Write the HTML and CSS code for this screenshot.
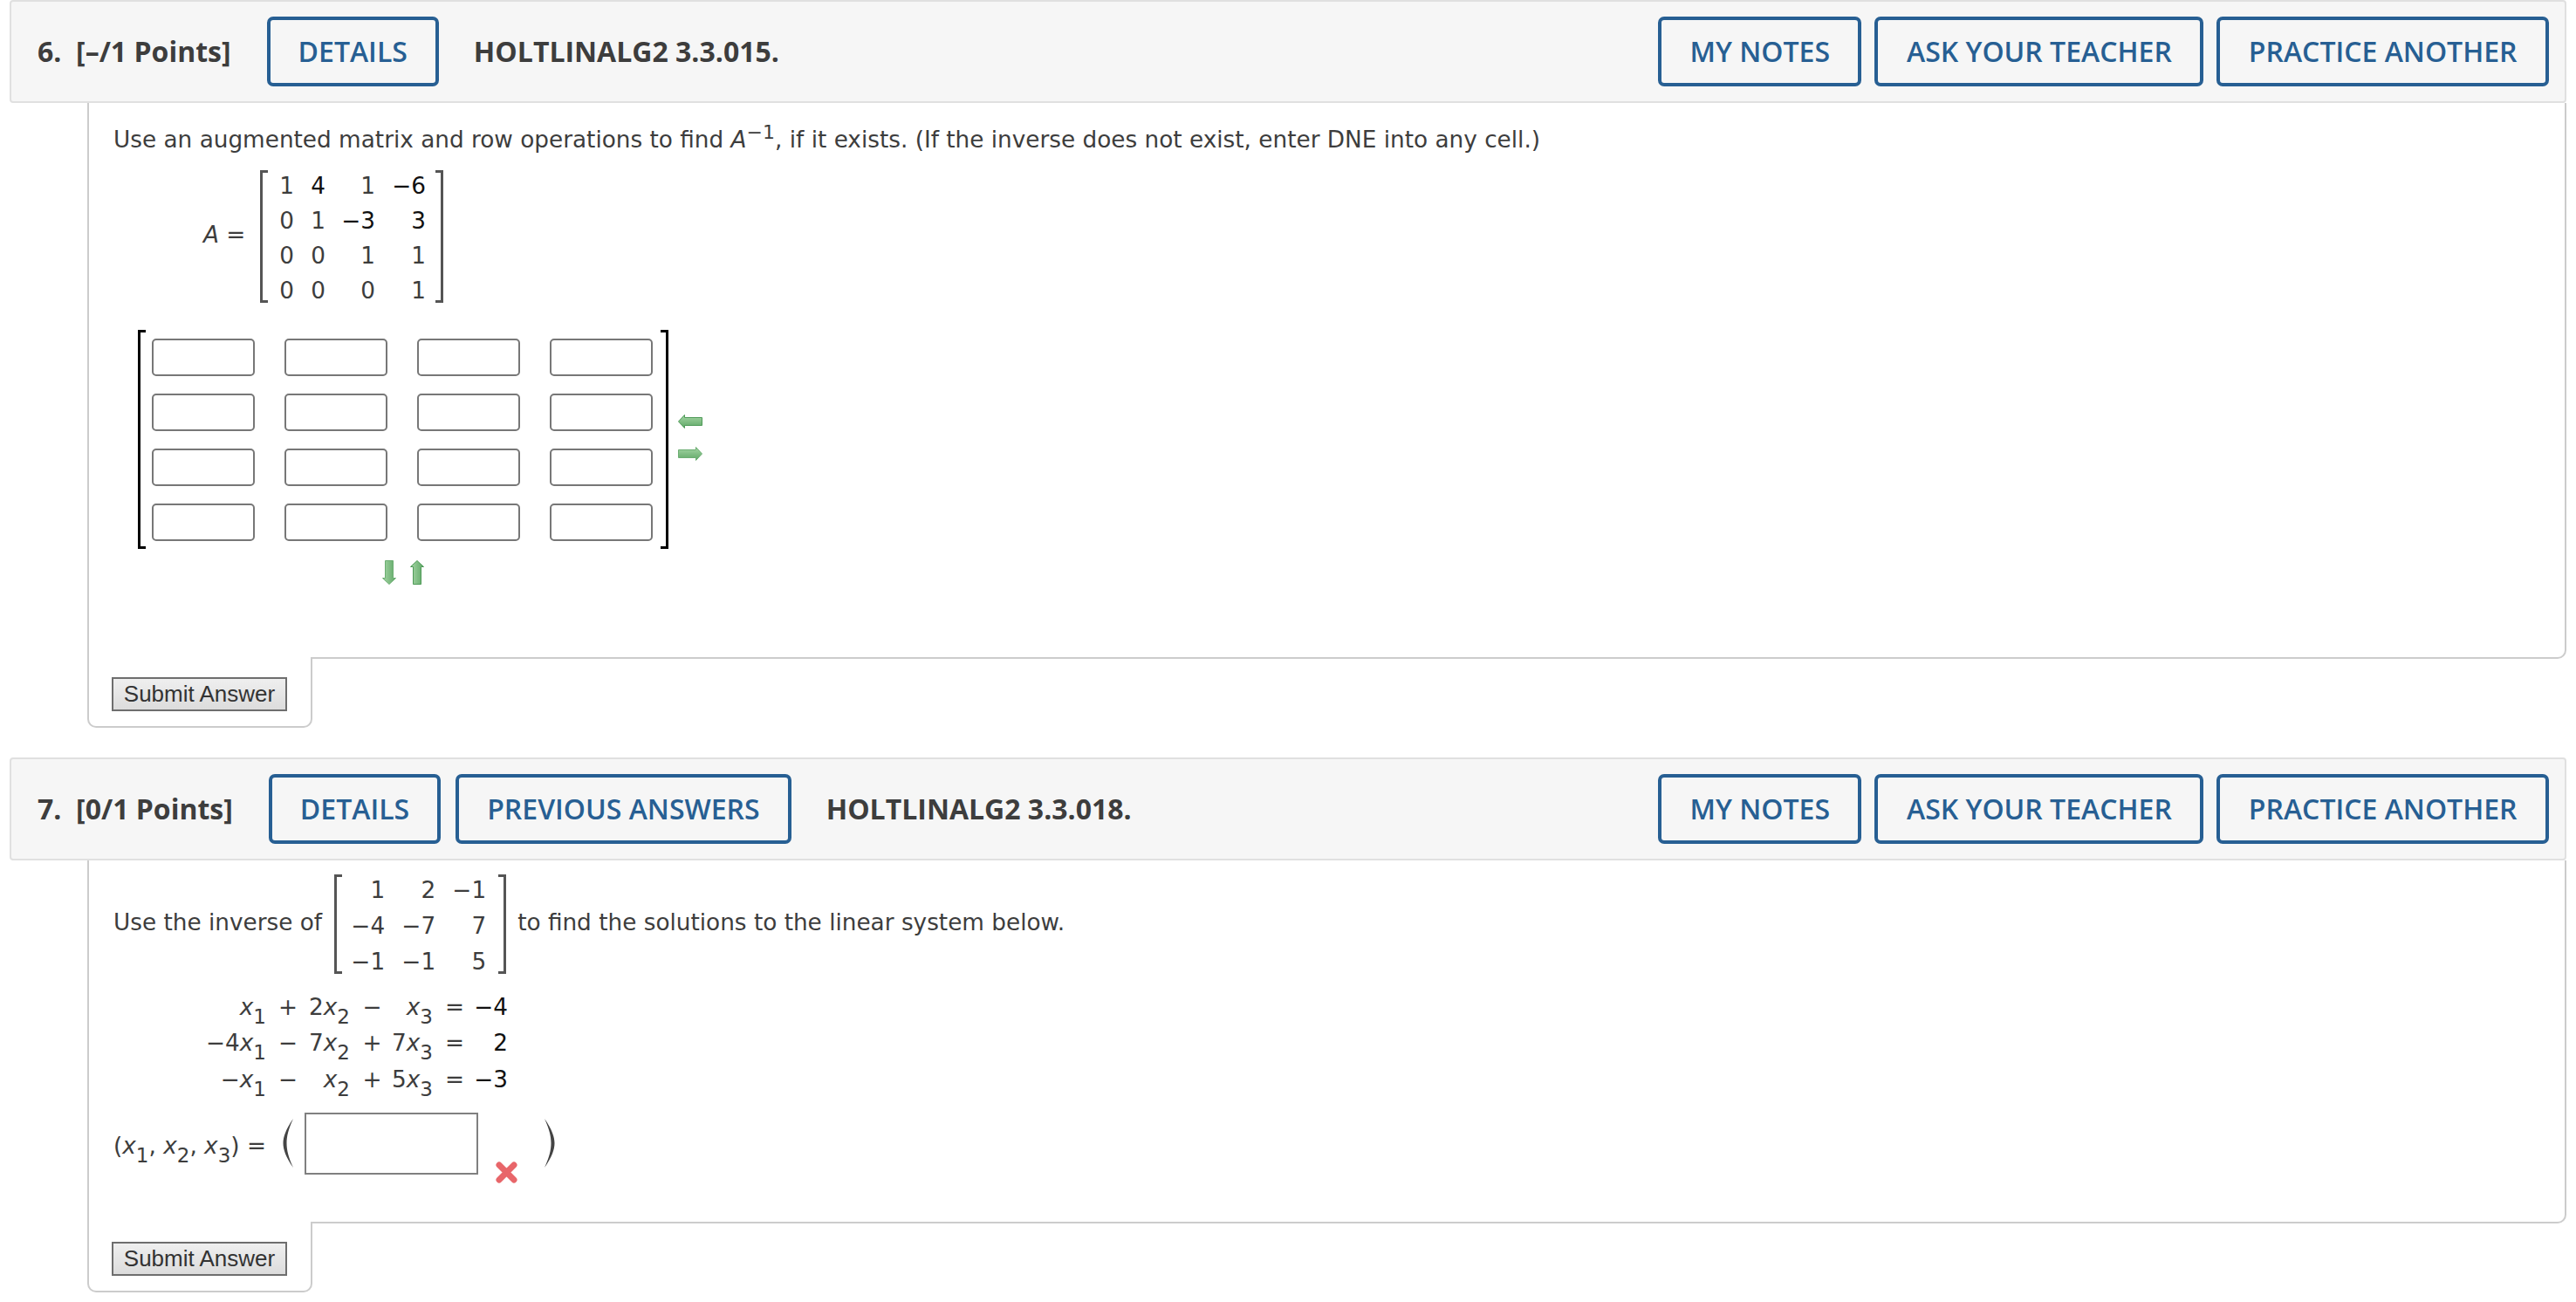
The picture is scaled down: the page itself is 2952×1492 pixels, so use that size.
FILE: index.html
```html
<!DOCTYPE html>
<html lang="en">
<head>
  <meta charset="UTF-8">
  <title>Assignment</title>
  <link rel="stylesheet" href="styles.css">
</head>
<body>
  <svg class="defs" width="0" height="0">
    <defs>
      <linearGradient id="arrowFill" x1="0" y1="0" x2="0" y2="1">
        <stop offset="0" stop-color="#a5d6a5"/>
        <stop offset="1" stop-color="#5fa766"/>
      </linearGradient>
      <linearGradient id="arrowFillV" x1="0" y1="0" x2="1" y2="0">
        <stop offset="0" stop-color="#a5d6a5"/>
        <stop offset="1" stop-color="#5fa766"/>
      </linearGradient>
    </defs>
  </svg>

  <!-- question 6 -->
  <div class="q-header">
    <span class="q-points">6.&nbsp; [–/1 Points]</span>
    <a class="q-btn q-btn-first">DETAILS</a>
    <span class="q-code">HOLTLINALG2 3.3.015.</span>
    <div class="q-actions">
      <a class="q-btn">MY NOTES</a>
      <a class="q-btn">ASK YOUR TEACHER</a>
      <a class="q-btn">PRACTICE ANOTHER</a>
    </div>
  </div>
  <div class="q-main q-main-six">
    <p class="q-text">Use an augmented matrix and row operations to find <i>A</i><sup class="inv">−1</sup>, if it exists. (If the inverse does not exist, enter DNE into any cell.)</p>

    <div class="a-line">
      <span class="a-label"><i>A</i> =</span>
      <span class="brk brk-l brk-four"></span>
      <div class="matrix matrix-a">
        <span>1</span><span class="dark">4</span><span>1</span><span class="dark">−6</span>
        <span>0</span><span>1</span><span class="dark">−3</span><span class="dark">3</span>
        <span>0</span><span>0</span><span>1</span><span>1</span>
        <span>0</span><span>0</span><span>0</span><span>1</span>
      </div>
      <span class="brk brk-r brk-four"></span>
    </div>

    <div class="entry">
      <div class="entry-wrap">
        <div class="entry-matrix">
          <div class="cell"></div><div class="cell"></div><div class="cell"></div><div class="cell"></div>
          <div class="cell"></div><div class="cell"></div><div class="cell"></div><div class="cell"></div>
          <div class="cell"></div><div class="cell"></div><div class="cell"></div><div class="cell"></div>
          <div class="cell"></div><div class="cell"></div><div class="cell"></div><div class="cell"></div>
        </div>
        <div class="col-arrows">
          <svg width="16" height="28" viewBox="0 0 16 28"><path d="M3.500 .5h9v20h3L8 27.500 .5 20.500h3z" fill="url(#arrowFillV)" stroke="#6cae72"/></svg>
          <svg width="16" height="28" viewBox="0 0 16 28"><path d="M3.500 27.500h9v-20h3L8 .5 .5 7.500h3z" fill="url(#arrowFillV)" stroke="#4f9a58"/></svg>
        </div>
      </div>
      <div class="row-arrows">
        <svg width="28" height="16" viewBox="0 0 28 16"><path d="M27.500 3.500v9h-20v3L.5 8l7-7.500v3z" fill="url(#arrowFill)" stroke="#4f9a58"/></svg>
        <svg width="28" height="16" viewBox="0 0 28 16"><path d="M.5 3.500v9h20v3L27.500 8l-7-7.500v3z" fill="url(#arrowFill)" stroke="#6cae72"/></svg>
      </div>
    </div>
  </div>
  <div class="q-tab"><button class="submit">Submit Answer</button></div>

  <!-- question 7 -->
  <div class="q-header q-header-next">
    <span class="q-points">7.&nbsp; [0/1 Points]</span>
    <a class="q-btn q-btn-first">DETAILS</a>
    <a class="q-btn q-btn-prev">PREVIOUS ANSWERS</a>
    <span class="q-code">HOLTLINALG2 3.3.018.</span>
    <div class="q-actions">
      <a class="q-btn">MY NOTES</a>
      <a class="q-btn">ASK YOUR TEACHER</a>
      <a class="q-btn">PRACTICE ANOTHER</a>
    </div>
  </div>
  <div class="q-main q-main-seven">
    <div class="inv-line">
      <span class="inv-text">Use the inverse of</span>
      <span class="brk brk-l brk-three"></span>
      <div class="matrix matrix-b">
        <span>1</span><span>2</span><span>−1</span>
        <span>−4</span><span>−7</span><span>7</span>
        <span>−1</span><span>−1</span><span>5</span>
      </div>
      <span class="brk brk-r brk-three"></span>
      <span class="inv-text inv-after">to find the solutions to the linear system below.</span>
    </div>

    <div class="system">
      <span><i>x</i><sub>1</sub></span><span class="op">+</span><span>2<i>x</i><sub>2</sub></span><span class="op">−</span><span><i>x</i><sub>3</sub></span><span class="op">=</span><span class="dark">−4</span>
      <span>−4<i>x</i><sub>1</sub></span><span class="op">−</span><span>7<i>x</i><sub>2</sub></span><span class="op">+</span><span>7<i>x</i><sub>3</sub></span><span class="op">=</span><span class="dark">2</span>
      <span>−<i>x</i><sub>1</sub></span><span class="op">−</span><span><i>x</i><sub>2</sub></span><span class="op">+</span><span>5<i>x</i><sub>3</sub></span><span class="op">=</span><span class="dark">−3</span>
    </div>

    <div class="answer">
      <span class="answer-label">(<i>x</i><sub>1</sub>, <i>x</i><sub>2</sub>, <i>x</i><sub>3</sub>) =</span>
      <svg class="paren" width="13" height="58" viewBox="0 0 13 58"><path d="M12 1C3.500 13 .5 22 .5 29S3.500 45 12 57C6.500 45 4.500 37 4.500 29S6.500 13 12 1z" fill="#444"/></svg>
      <div class="answer-box"></div>
      <svg class="wrong" width="27" height="27" viewBox="0 0 27 27"><path d="M5 5l17 17M22 5L5 22" stroke="#e8666a" stroke-width="7" stroke-linecap="round"/></svg>
      <svg class="paren" width="13" height="58" viewBox="0 0 13 58"><path d="M1 1c8.500 12 11.500 21 11.500 28S9.500 45 1 57C6.500 45 8.500 37 8.500 29S6.500 13 1 1z" fill="#444"/></svg>
    </div>
  </div>
  <div class="q-tab"><button class="submit">Submit Answer</button></div>
</body>
</html>
```

FILE: styles.css
```css
body {
  margin: 0;
  background: #fff;
  color: #3d3d3d;
  font-family: "DejaVu Sans", sans-serif;
  font-size: 26.300px;
}

.defs {
  position: absolute;
}

.dark {
  color: #111;
}

/* question header bar */
.q-header {
  display: flex;
  align-items: center;
  box-sizing: border-box;
  height: 118px;
  margin: 0 11px;
  padding: 0 18px 0 30px;
  background: #f6f6f6;
  border: 2px solid #e0e0e0;
  border-radius: 4px;
  font-family: "Open Sans", sans-serif;
}

.q-header-next {
  margin-top: 34px;
}

.q-points {
  margin-bottom: 2px;
  font-size: 32px;
  font-weight: 700;
  white-space: nowrap;
}

.q-code {
  margin: 0 0 2px 40px;
  font-size: 32px;
  font-weight: 700;
  white-space: nowrap;
}

.q-btn {
  display: flex;
  align-items: center;
  box-sizing: border-box;
  height: 80px;
  padding: 0 32px 2px;
  border: 4px solid #275f93;
  border-radius: 7px;
  color: #275f93;
  font-size: 32px;
  font-weight: 600;
  white-space: nowrap;
}

.q-btn-first {
  margin-left: 41px;
}

.q-btn-prev {
  margin-left: 17px;
}

.q-actions {
  display: flex;
  gap: 15px;
  margin-left: auto;
}

.q-actions .q-btn {
  padding: 0 32.500px 2px;
}

/* question body, with the tab for the submit button below it */
.q-main {
  margin: 0 11px 0 100px;
  border: 2px solid #ccc;
  border-top: none;
  border-bottom-right-radius: 10px;
  background: #fff;
}

.q-main-six {
  padding: 22px 0 83px 28px;
}

.q-main-seven {
  padding: 13px 0 54px 28px;
}

.q-tab {
  box-sizing: border-box;
  width: 258px;
  height: 81px;
  margin: -2px 0 0 100px;
  padding: 23px 0 0 26px;
  border: 2px solid #ccc;
  border-top: none;
  border-radius: 0 0 10px 10px;
  background: #fff;
}

.submit {
  display: block;
  box-sizing: border-box;
  width: 201px;
  height: 39px;
  padding: 0;
  border: 2px solid #6e6e6e;
  background: linear-gradient(#efefef, #dcdcdc);
  color: #333;
  font-family: "Liberation Sans", sans-serif;
  font-size: 26px;
}

.q-text {
  margin: 0;
  line-height: 40px;
  white-space: nowrap;
}

.inv {
  font-size: 22px;
  line-height: 0;
  vertical-align: 10px;
}

/* brackets and number matrices */
.brk {
  display: block;
  box-sizing: border-box;
  width: 9px;
  border: 3px solid #555;
}

.brk-l {
  border-right: none;
}

.brk-r {
  border-left: none;
}

.brk-four {
  margin: 2px 0 6px;
}

.brk-three {
  margin: 3px 0 6px;
}

.a-line {
  display: flex;
  margin: 13px 0 0 103px;
}

.a-label {
  align-self: center;
  width: 65px;
  margin-bottom: 8px;
  white-space: nowrap;
}

.matrix {
  display: grid;
  justify-items: end;
  align-items: center;
}

.matrix-a {
  grid-template-columns: 30px 36px 57px 58px;
  grid-auto-rows: 40px;
  padding: 0 11px 0 0;
}

.matrix-b {
  grid-template-columns: 49px 58px 58px;
  grid-auto-rows: 41px;
  padding: 0 14px 0 0;
}

/* empty entry grid */
.entry {
  display: flex;
  align-items: flex-start;
  margin: 25px 0 0 28px;
}

.entry-wrap {
  width: 608px;
}

.entry-matrix {
  display: grid;
  grid-template-columns: repeat(4, 118px);
  grid-auto-rows: 43px;
  gap: 20px 34px;
  box-sizing: border-box;
  height: 251px;
  padding: 10px 0 0 13px;
  border-left: 3px solid #000;
  border-right: 3px solid #000;
  background:
    linear-gradient(#000, #000) 0 0 / 6px 3px no-repeat,
    linear-gradient(#000, #000) 0 100% / 6px 3px no-repeat,
    linear-gradient(#000, #000) 100% 0 / 6px 3px no-repeat,
    linear-gradient(#000, #000) 100% 100% / 6px 3px no-repeat;
}

.cell {
  box-sizing: border-box;
  border: 2px solid #777;
  border-radius: 5px;
  background: #fff;
}

.row-arrows {
  display: flex;
  flex-direction: column;
  gap: 21px;
  margin: 97px 0 0 11px;
}

.col-arrows {
  display: flex;
  justify-content: center;
  gap: 16px;
  margin-top: 13px;
}

/* question 7 */
.inv-line {
  display: flex;
  align-items: stretch;
  white-space: nowrap;
}

.inv-text {
  align-self: center;
  margin-bottom: 8px;
  padding-right: 14px;
}

.inv-after {
  padding-left: 13px;
}

.system {
  display: grid;
  grid-template-columns: 175px 50px 46px 51px 44px 50px 36px;
  grid-auto-rows: 41.500px;
  align-items: center;
  justify-items: end;
  margin-top: 11px;
  white-space: nowrap;
}

.system .op {
  justify-self: center;
}

sub {
  font-size: 23px;
  line-height: 0;
  vertical-align: -10px;
}

.answer {
  display: flex;
  align-items: center;
  height: 71px;
  margin-top: 17px;
}

.answer-label {
  width: 194px;
  margin-top: 5px;
  white-space: nowrap;
}

.answer-box {
  box-sizing: border-box;
  width: 199px;
  height: 71px;
  margin-left: 12px;
  border: 2px solid #808080;
  background: #fff;
}

.wrong {
  align-self: flex-end;
  margin: 0 29px -11px 19px;
}
```
